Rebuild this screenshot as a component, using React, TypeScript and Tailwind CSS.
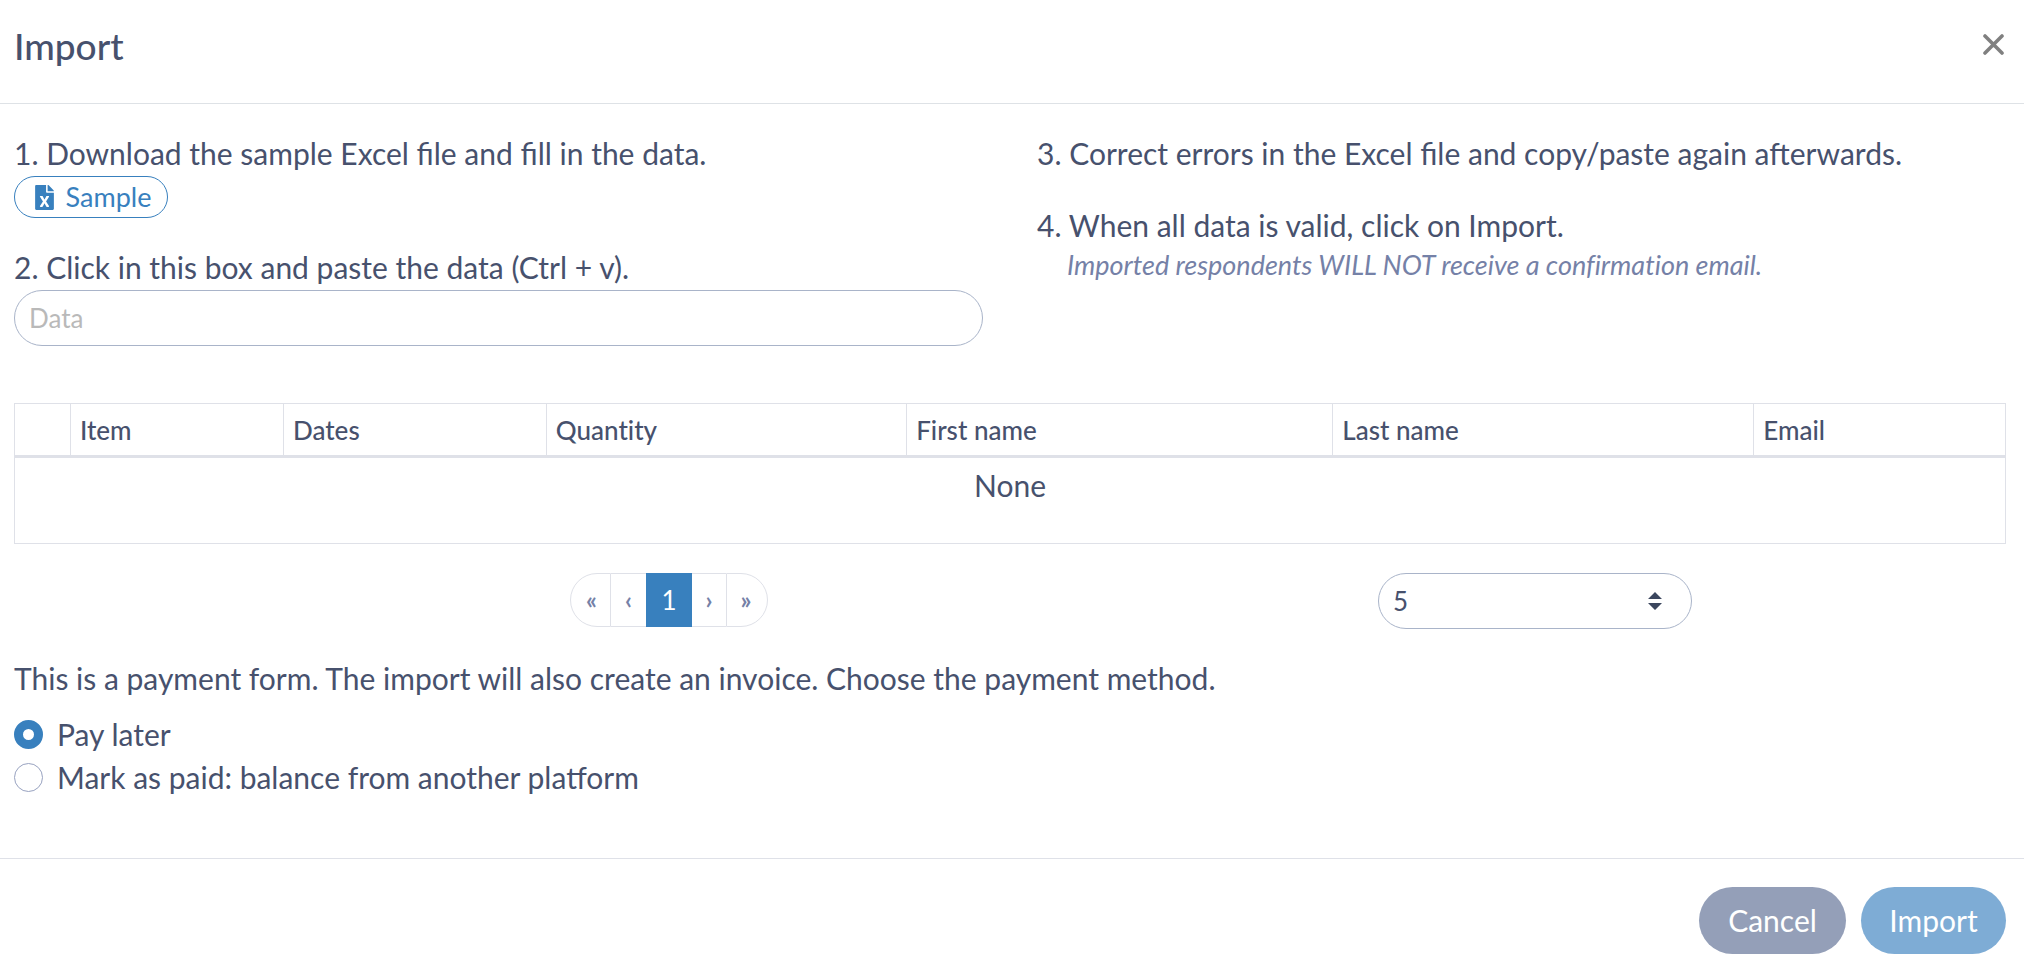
import { useState } from 'react'
import { FaFileExcel } from 'react-icons/fa'

const columns = [
	{ label: '', width: 'w-14' },
	{ label: 'Item', width: 'w-[10.7%]' },
	{ label: 'Dates', width: 'w-[13.2%]' },
	{ label: 'Quantity', width: 'w-[18.1%]' },
	{ label: 'First name', width: 'w-[21.4%]' },
	{ label: 'Last name', width: 'w-[21.15%]' },
	{ label: 'Email', width: '' },
]

const paymentMethods = [
	{ id: 'later', label: 'Pay later' },
	{ id: 'paid', label: 'Mark as paid: balance from another platform' },
]

const ImportModal: React.FC = () => {
	const [data, setData] = useState('')
	const [perPage, setPerPage] = useState('5')
	const [method, setMethod] = useState('later')

	return (
		<div
			role="dialog"
			aria-labelledby="import-title"
			className="bg-white font-['Lato','Nunito',sans-serif] text-[30px] leading-[42px] text-[#47516d]">
			<header className="flex items-start justify-between border-b border-[#dee2e6] pt-5 pr-5 pb-8 pl-3.5">
				<h1
					id="import-title"
					className="text-[37px] leading-[51px] font-medium">
					Import
				</h1>
				<button type="button" aria-label="Close" className="mt-3.5">
					<CloseIcon />
				</button>
			</header>

			<main className="pt-7 pr-[18px] pb-[59px] pl-3.5">
				<div className="grid grid-cols-2 gap-[54px]">
					<div>
						<p className="mb-0.5">
							1. Download the sample Excel file and fill in the data.
						</p>
						<a
							href="#sample"
							className="mb-7 flex h-[42px] w-[154px] items-center justify-center gap-3 rounded-full border border-[#3880be] pl-1 text-[27px] text-[#3880be]">
							<FaFileExcel className="h-[25px] w-[19px]" />
							Sample
						</a>
						<label htmlFor="data" className="mb-0.5 block">
							2. Click in this box and paste the data (Ctrl + v).
						</label>
						<input
							id="data"
							type="text"
							placeholder="Data"
							value={data}
							onChange={(e) => setData(e.target.value)}
							className="block h-14 w-full rounded-full border border-[#a9b4c9] px-3.5 text-[26px] placeholder:text-[#b9b9b9]"
						/>
					</div>
					<div>
						<p className="mb-[30px]">
							3. Correct errors in the Excel file and copy/paste again
							afterwards.
						</p>
						<p>4. When all data is valid, click on Import.</p>
						<p className="pl-[30px] text-[27px] leading-[38px] text-[#7581a7] italic [font-variant-ligatures:none]">
							Imported respondents WILL NOT receive a confirmation email.
						</p>
					</div>
				</div>

				<table className="mt-[57px] w-full table-fixed border-collapse border border-[#dfe1e8]">
					<thead>
						<tr className="h-[53px] border-b-3 border-[#dfe1e8]">
							{columns.map((column) => (
								<th
									key={column.label}
									scope="col"
									className={`border-r border-[#dfe1e8] px-[9px] text-left text-[26px] leading-9 font-medium [font-variant-ligatures:none] ${column.width}`}>
									{column.label}
								</th>
							))}
						</tr>
					</thead>
					<tbody>
						<tr>
							<td colSpan={7} className="h-[87px] pt-1.5 text-center align-top">
								None
							</td>
						</tr>
					</tbody>
				</table>

				<div className="mt-[29px] grid grid-cols-12 gap-[54px]">
					<Pagination />
					<div className="relative col-span-4 w-[314px]">
						<select
							aria-label="Rows per page"
							value={perPage}
							onChange={(e) => setPerPage(e.target.value)}
							className="block h-14 w-full appearance-none rounded-full border border-[#a9b4c9] bg-white px-3.5 text-[26px]">
							<option value="5">5</option>
							<option value="10">10</option>
							<option value="25">25</option>
						</select>
						<SortIcon />
					</div>
				</div>

				<fieldset className="mt-7 leading-[43px]">
					<legend className="mb-[13px]">
						This is a payment form. The import will also create an invoice.
						Choose the payment method.
					</legend>
					{paymentMethods.map(({ id, label }) => (
						<label key={id} className="flex items-center gap-3.5">
							<input
								type="radio"
								name="method"
								value={id}
								checked={method === id}
								onChange={() => setMethod(id)}
								className="size-[29px] appearance-none rounded-full border border-[#98a2c0] checked:border-9 checked:border-[#3880be]"
							/>
							{label}
						</label>
					))}
				</fieldset>
			</main>

			<footer className="flex justify-end gap-[15px] border-t border-[#dfe1e8] pt-7 pr-[18px] pb-5">
				<button
					type="button"
					className="h-[67px] w-[147px] rounded-full bg-[#949fb8] pb-0.5 text-white">
					Cancel
				</button>
				<button
					type="button"
					className="h-[67px] w-[145px] rounded-full bg-[#7eacd5] pb-0.5 text-white">
					Import
				</button>
			</footer>
		</div>
	)
}

const Pagination: React.FC = () => {
	return (
		<nav
			aria-label="Pagination"
			className="col-span-8 flex h-[54px] justify-center text-[24px] font-bold text-[#7581a7]">
			<button
				type="button"
				aria-label="First page"
				className="w-[41px] rounded-l-full border border-[#dfe1e8] pl-0.5">
				«
			</button>
			<button
				type="button"
				aria-label="Previous page"
				className="w-[35px] border-y border-[#dfe1e8]">
				‹
			</button>
			<button
				type="button"
				aria-current="page"
				className="w-[46px] bg-[#3880be] text-[26px] font-normal text-white">
				1
			</button>
			<button
				type="button"
				aria-label="Next page"
				className="w-[34px] border-y border-[#dfe1e8]">
				›
			</button>
			<button
				type="button"
				aria-label="Last page"
				className="w-[42px] rounded-r-full border border-[#dfe1e8] pr-0.5">
				»
			</button>
		</nav>
	)
}

const CloseIcon: React.FC = () => {
	return (
		<svg
			viewBox="0 0 21 21"
			className="size-[21px]"
			stroke="#808080"
			strokeWidth="3.6"
			strokeLinecap="round">
			<path d="M2 2L19 19M19 2L2 19" />
		</svg>
	)
}

const SortIcon: React.FC = () => {
	return (
		<svg
			viewBox="0 0 14 18"
			fill="#3b465e"
			className="pointer-events-none absolute top-[19px] right-[30px] h-[18px] w-3.5">
			<path d="M0 7L7 0L14 7ZM0 11L7 18L14 11Z" />
		</svg>
	)
}

export default ImportModal
